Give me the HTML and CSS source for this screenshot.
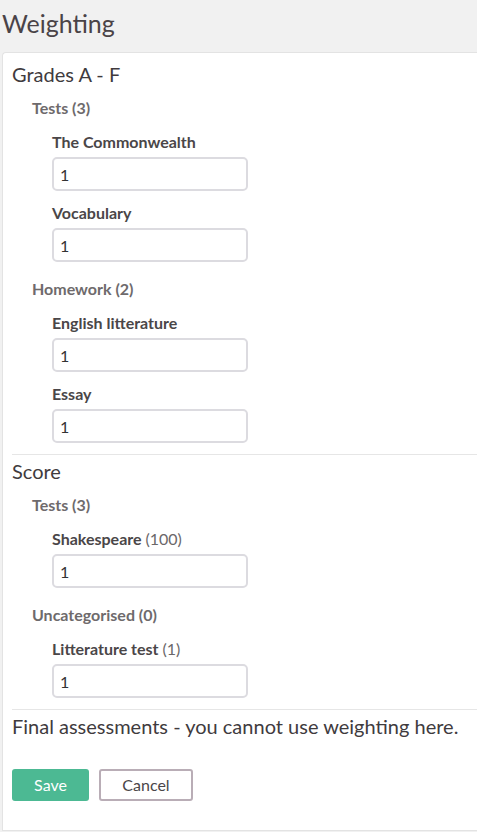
FILE: index.html
```html
<!DOCTYPE html>
<html lang="en">
<head>
<meta charset="utf-8">
<title>Weighting</title>
<link rel="stylesheet" href="styles.css">
</head>
<body>
<h1 class="page-title">Weighting</h1>
<form class="card">
  <section class="section">
    <h2 class="section-title">Grades A - F</h2>
    <div class="group">
      <h3 class="group-title">Tests (3)</h3>
      <div class="field">
        <label class="field-label">The Commonwealth</label>
        <input class="field-input" type="text" value="1">
      </div>
      <div class="field">
        <label class="field-label">Vocabulary</label>
        <input class="field-input" type="text" value="1">
      </div>
    </div>
    <div class="group">
      <h3 class="group-title">Homework (2)</h3>
      <div class="field">
        <label class="field-label">English litterature</label>
        <input class="field-input" type="text" value="1">
      </div>
      <div class="field">
        <label class="field-label">Essay</label>
        <input class="field-input" type="text" value="1">
      </div>
    </div>
  </section>
  <section class="section">
    <h2 class="section-title">Score</h2>
    <div class="group">
      <h3 class="group-title">Tests (3)</h3>
      <div class="field">
        <label class="field-label">Shakespeare <span class="muted">(100)</span></label>
        <input class="field-input" type="text" value="1">
      </div>
    </div>
    <div class="group">
      <h3 class="group-title">Uncategorised (0)</h3>
      <div class="field">
        <label class="field-label">Litterature test <span class="muted">(1)</span></label>
        <input class="field-input" type="text" value="1">
      </div>
    </div>
  </section>
  <p class="note">Final assessments - you cannot use weighting here.</p>
  <div class="actions">
    <button type="button" class="btn btn-save">Save</button>
    <button type="button" class="btn btn-cancel">Cancel</button>
  </div>
</form>
</body>
</html>
```

FILE: styles.css
```css
html, body {
  margin: 0;
  padding: 0;
  overflow: hidden;
}

body {
  background: #f1f1f1;
  font-family: Lato, "Open Sans", "Liberation Sans", sans-serif;
  color: #444;
}

.page-title {
  margin: 0 0 14px 0;
  padding: 8px 2px 0 2px;
  font-size: 25px;
  font-weight: 400;
  line-height: 30px;
  color: #4a4347;
}

.card {
  margin: 0 0 0 2px;
  background: #fff;
  border: 1px solid #e3e3e3;
  border-right: 0;
  border-radius: 4px 0 0 0;
  padding: 9px 0 29px 9px;
}

.section {
  border-bottom: 1px solid #e6e6e6;
  padding-bottom: 11px;
}

.section + .section {
  padding-top: 4px;
}

.section-title {
  margin: 0 0 12px 0;
  font-size: 20px;
  font-weight: 400;
  line-height: 24px;
  color: #3f3b3e;
}

.group {
  padding-left: 20px;
}

.group + .group {
  margin-top: 17px;
}

.group-title {
  margin: 0 0 14px 0;
  font-size: 16px;
  font-weight: 700;
  line-height: 20px;
  color: #6e6a6c;
}

.field {
  display: flex;
  flex-direction: column;
  align-items: flex-start;
  padding-left: 20px;
}

.field + .field {
  margin-top: 12px;
}

.field-label {
  display: block;
  margin-bottom: 5px;
  font-size: 16px;
  font-weight: 700;
  line-height: 20px;
  color: #4a4648;
}

.muted {
  font-weight: 400;
  color: #6b6769;
}

.field-input {
  box-sizing: border-box;
  width: 196px;
  height: 34px;
  margin: 0;
  padding: 0 6px;
  border: 2px solid #dcdbe0;
  border-radius: 5px;
  background: #fff;
  font-family: Lato, "Open Sans", "Liberation Sans", sans-serif;
  font-size: 16px;
  color: #333;
  outline: none;
}

.note {
  margin: 4px 0 31px 0;
  font-size: 20px;
  line-height: 24px;
  color: #3f3b3e;
}

.actions {
  display: flex;
  gap: 10px;
}

.btn {
  box-sizing: border-box;
  height: 32px;
  margin: 0;
  border-radius: 3px;
  font-family: Lato, "Open Sans", "Liberation Sans", sans-serif;
  font-size: 16px;
  line-height: 20px;
  cursor: pointer;
}

.btn-save {
  width: 77px;
  background: #4cb993;
  border: 0;
  color: #fff;
}

.btn-cancel {
  width: 94px;
  background: #fff;
  border: 2px solid #b9adb6;
  color: #4a4648;
}
```
